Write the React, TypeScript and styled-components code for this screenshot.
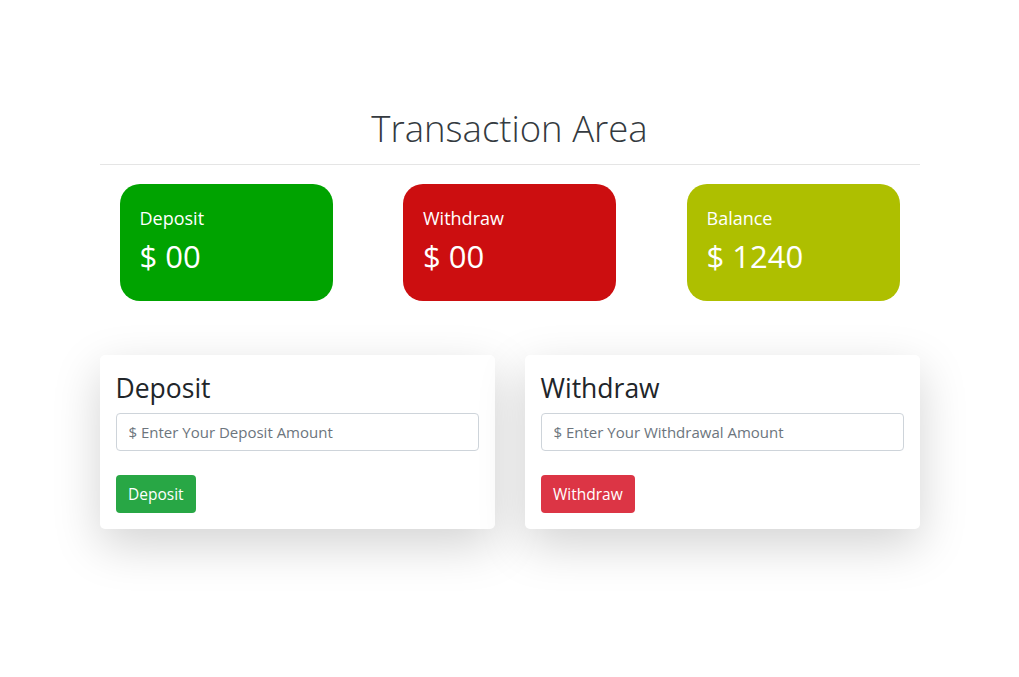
import React from "react";
import styled, { createGlobalStyle } from "styled-components";

const Global = createGlobalStyle`
  html, body { margin: 0; padding: 0; background: #fff; }
  body { font-family: "Open Sans", "Noto Sans", sans-serif; color: #212529; }
  * { box-sizing: border-box; }
`;

const Page = styled.div`
  width: 820px;
  min-height: 100vh;
  margin: 0 auto;
  padding: 100px 0 60px;
`;

const Title = styled.h1`
  margin: 0;
  text-align: center;
  font-weight: 300;
  font-size: 36.5px;
  line-height: 56px;
  color: #343a40;
`;

const Rule = styled.hr`
  margin: 8px 0 0;
  border: 0;
  border-top: 1px solid rgba(0, 0, 0, 0.1);
`;

const StatRow = styled.div`
  display: flex;
  justify-content: space-between;
  padding: 0 20px;
  margin-top: 19px;
`;

const StatCard = styled.div<{ $bg: string }>`
  width: 213px;
  height: 117px;
  border-radius: 20px;
  background: ${(p) => p.$bg};
  color: #fff;
  padding: 22px 20px;
  display: flex;
  flex-direction: column;
  gap: 6px;
`;

const StatLabel = styled.div`
  font-size: 18px;
  line-height: 24px;
`;

const StatValue = styled.div`
  font-size: 31px;
  line-height: 40px;
`;

const FormRow = styled.div`
  display: grid;
  grid-template-columns: 1fr 1fr;
  gap: 30px;
  margin-top: 54px;
`;

const FormCard = styled.div`
  background: #fff;
  border-radius: 5px;
  padding: 16px;
  box-shadow: 0 16px 48px rgba(0, 0, 0, 0.175);
`;

const FormTitle = styled.h2`
  margin: 0 0 8px;
  font-size: 26.5px;
  font-weight: 400;
  line-height: 34px;
  color: #212529;
`;

const Input = styled.input`
  display: block;
  width: 100%;
  height: 38px;
  padding: 6px 12px;
  border: 1px solid #ced4da;
  border-radius: 4px;
  font-family: inherit;
  font-size: 15px;
  color: #495057;
  outline: none;
  &::placeholder { color: #6c757d; }
`;

const Button = styled.button<{ $bg: string }>`
  margin-top: 24px;
  height: 38px;
  padding: 0 12.5px;
  border: 0;
  border-radius: 4px;
  background: ${(p) => p.$bg};
  color: #fff;
  font-family: inherit;
  font-size: 15.5px;
  cursor: pointer;
`;

export default function App() {
  return (
    <>
      <Global />
      <Page>
        <Title>Transaction Area</Title>
        <Rule />
        <StatRow>
          <StatCard $bg="#00a300">
            <StatLabel>Deposit</StatLabel>
            <StatValue>$ 00</StatValue>
          </StatCard>
          <StatCard $bg="#cc0e10">
            <StatLabel>Withdraw</StatLabel>
            <StatValue>$ 00</StatValue>
          </StatCard>
          <StatCard $bg="#aebf00">
            <StatLabel>Balance</StatLabel>
            <StatValue>$ 1240</StatValue>
          </StatCard>
        </StatRow>
        <FormRow>
          <FormCard>
            <FormTitle>Deposit</FormTitle>
            <Input placeholder="$ Enter Your Deposit Amount" />
            <Button $bg="#28a745">Deposit</Button>
          </FormCard>
          <FormCard>
            <FormTitle>Withdraw</FormTitle>
            <Input placeholder="$ Enter Your Withdrawal Amount" />
            <Button $bg="#dc3545">Withdraw</Button>
          </FormCard>
        </FormRow>
      </Page>
    </>
  );
}
